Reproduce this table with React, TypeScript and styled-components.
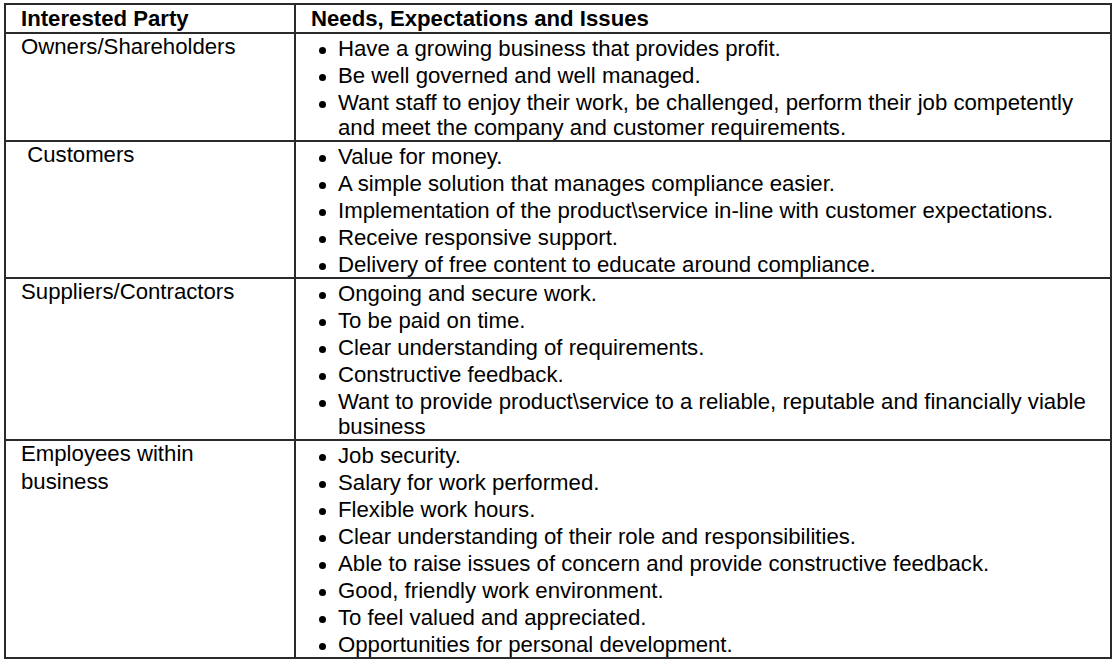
import React from "react";
import styled, { createGlobalStyle } from "styled-components";

const Global = createGlobalStyle`
  html, body { margin: 0; padding: 0; background: #ffffff; }
  body { font-family: "Liberation Sans", Arial, sans-serif; color: #000; }
`;

const Page = styled.div`
  padding: 3px 0 0 4px;
`;

const Table = styled.table`
  border-collapse: collapse;
  width: 1106px;
  table-layout: fixed;
  font-size: 22.2px;
  line-height: 25px;
`;

const Col = styled.col<{ $w: number }>`
  width: ${(p) => p.$w}px;
`;

const HeadCell = styled.th`
  border: 2px solid #2a2a2a;
  text-align: left;
  font-weight: bold;
  padding: 1px 0 0 15px;
  height: 26px;
  vertical-align: top;
`;

const Cell = styled.td`
  border: 2px solid #2a2a2a;
  vertical-align: top;
  padding: 2px 4px 0 15px;
`;

const PartyCell = styled(Cell)`
  padding-right: 18px;
`;

const PartyName = styled.div`
  line-height: 28px;
  margin-top: -3px;
  white-space: pre-wrap;
`;

const List = styled.ul`
  list-style: none;
  margin: 0;
  padding: 0;
`;

const Item = styled.li`
  display: flex;
  margin-bottom: 2px;
  &:last-child { margin-bottom: 0; }
`;

const Bullet = styled.span`
  flex: 0 0 27px;
  position: relative;
  height: 25px;
  &::before {
    content: "";
    position: absolute;
    left: 8px;
    top: 11px;
    width: 7px;
    height: 7px;
    border-radius: 50%;
    background: #000;
  }
`;

const rows: { party: string; items: string[] }[] = [
  {
    party: "Owners/Shareholders",
    items: [
      "Have a growing business that provides profit.",
      "Be well governed and well managed.",
      "Want staff to enjoy their work, be challenged, perform their job competently and meet the company and customer requirements.",
    ],
  },
  {
    party: " Customers",
    items: [
      "Value for money.",
      "A simple solution that manages compliance easier.",
      "Implementation of the product\\service in-line with customer expectations.",
      "Receive responsive support.",
      "Delivery of free content to educate around compliance.",
    ],
  },
  {
    party: "Suppliers/Contractors",
    items: [
      "Ongoing and secure work.",
      "To be paid on time.",
      "Clear understanding of requirements.",
      "Constructive feedback.",
      "Want to provide product\\service to a reliable, reputable and financially viable business",
    ],
  },
  {
    party: "Employees within business",
    items: [
      "Job security.",
      "Salary for work performed.",
      "Flexible work hours.",
      "Clear understanding of their role and responsibilities.",
      "Able to raise issues of concern and provide constructive feedback.",
      "Good, friendly work environment.",
      "To feel valued and appreciated.",
      "Opportunities for personal development.",
    ],
  },
];

export default function App() {
  return (
    <Page>
      <Global />
      <Table>
        <colgroup>
          <Col $w={290} />
          <Col $w={816} />
        </colgroup>
        <thead>
          <tr>
            <HeadCell>Interested Party</HeadCell>
            <HeadCell>Needs, Expectations and Issues</HeadCell>
          </tr>
        </thead>
        <tbody>
          {rows.map((r) => (
            <tr key={r.party}>
              <PartyCell>
                <PartyName>{r.party}</PartyName>
              </PartyCell>
              <Cell>
                <List>
                  {r.items.map((it) => (
                    <Item key={it}>
                      <Bullet aria-hidden="true" />
                      <span>{it}</span>
                    </Item>
                  ))}
                </List>
              </Cell>
            </tr>
          ))}
        </tbody>
      </Table>
    </Page>
  );
}
